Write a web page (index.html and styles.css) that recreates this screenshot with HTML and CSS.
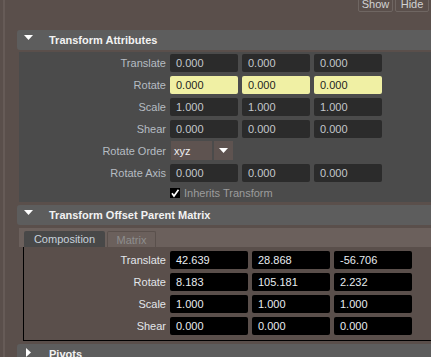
FILE: index.html
```html
<!DOCTYPE html>
<html>
<head>
<meta charset="utf-8">
<link rel="stylesheet" href="styles.css">
</head>
<body>
<div class="page">
  <div class="rail">
    <div class="topbar">
      <div class="tbtn show">Show</div>
      <div class="tbtn hide">Hide</div>
    </div>

    <div class="hdr">
      <svg class="tri-down" width="9" height="5" viewBox="0 0 9 5"><polygon points="0,0 9,0 4.5,5" fill="#ffffff"/></svg>
      <span class="hdr-title">Transform Attributes</span>
    </div>
    <div class="attrs">
      <div class="lbl">Translate</div>
      <div class="fld">0.000</div><div class="fld">0.000</div><div class="fld">0.000</div>
      <div class="lbl">Rotate</div>
      <div class="fld hi">0.000</div><div class="fld hi">0.000</div><div class="fld hi">0.000</div>
      <div class="lbl">Scale</div>
      <div class="fld">1.000</div><div class="fld">1.000</div><div class="fld">1.000</div>
      <div class="lbl">Shear</div>
      <div class="fld">0.000</div><div class="fld">0.000</div><div class="fld">0.000</div>
      <div class="lbl">Rotate Order</div>
      <div class="combo">
        <div class="combo-val">xyz</div>
        <div class="combo-btn"><svg width="9" height="5" viewBox="0 0 9 5"><polygon points="0,0 9,0 4.5,5" fill="#ffffff"/></svg></div>
      </div>
      <div class="lbl">Rotate Axis</div>
      <div class="fld">0.000</div><div class="fld">0.000</div><div class="fld">0.000</div>
      <div class="check-row">
        <svg class="cbox" width="10" height="10" viewBox="0 0 10 10"><rect width="10" height="10" fill="#000"/><path d="M2 5.2 L4 8 L8.5 1.8" stroke="#fff" stroke-width="1.7" fill="none"/></svg>
        <span class="check-lbl">Inherits Transform</span>
      </div>
    </div>

    <div class="hdr gap">
      <svg class="tri-down" width="9" height="5" viewBox="0 0 9 5"><polygon points="0,0 9,0 4.5,5" fill="#ffffff"/></svg>
      <span class="hdr-title">Transform Offset Parent Matrix</span>
    </div>
    <div class="tabs">
      <div class="tab active">Composition</div>
      <div class="tab inactive">Matrix</div>
    </div>
    <div class="mbox">
      <div class="lbl light">Translate</div>
      <div class="mfld">42.639</div><div class="mfld">28.868</div><div class="mfld">-56.706</div>
      <div class="lbl light">Rotate</div>
      <div class="mfld">8.183</div><div class="mfld">105.181</div><div class="mfld">2.232</div>
      <div class="lbl light">Scale</div>
      <div class="mfld">1.000</div><div class="mfld">1.000</div><div class="mfld">1.000</div>
      <div class="lbl light">Shear</div>
      <div class="mfld">0.000</div><div class="mfld">0.000</div><div class="mfld">0.000</div>
    </div>

    <div class="hdr gap">
      <svg class="tri-right" width="5" height="9" viewBox="0 0 5 9"><polygon points="0,0 5,4.5 0,9" fill="#ffffff"/></svg>
      <span class="hdr-title">Pivots</span>
    </div>
  </div>
</div>
</body>
</html>
```

FILE: styles.css
```css
html, body {
  margin: 0;
  padding: 0;
  overflow: hidden;
  background: #5a4f4b;
  font-family: "Liberation Sans", Arial, sans-serif;
  font-size: 11px;
}

.page {
  padding-left: 3px;
  height: 357px;
}

.rail {
  border-left: 2px solid #665b57;
  padding-left: 12px;
  height: 100%;
}

.topbar {
  height: 30px;
  display: flex;
  justify-content: flex-end;
  align-items: flex-start;
  gap: 2px;
  padding-right: 2px;
}

.tbtn {
  box-sizing: border-box;
  height: 20px;
  margin-top: -8px;
  border: 1px solid #6f6662;
  border-radius: 2px;
  color: #d2d2d2;
  display: flex;
  align-items: center;
  justify-content: center;
  padding-top: 3px;
}
.show { width: 35px; }
.hide { width: 34px; }

.hdr {
  height: 20px;
  background: #5d5d5d;
  border-radius: 3px 0 0 3px;
  display: flex;
  align-items: center;
  padding-left: 7px;
}
.hdr.gap { margin-top: 3px; }

.tri-down {
  align-self: flex-start;
  margin-top: 5px;
  flex: none;
}
.tri-right {
  align-self: flex-start;
  margin-top: 4px;
  margin-left: 2px;
  margin-right: 2px;
  flex: none;
}

.hdr-title {
  margin-left: 16px;
  color: #f2f2f2;
  font-weight: bold;
}

.attrs {
  margin-top: 2px;
  margin-left: 2px;
  background: #4b4b4b;
  display: grid;
  grid-template-columns: 147px 68px 68px 68px;
  grid-template-rows: repeat(6, 18px) 14px;
  column-gap: 4px;
  row-gap: 4px;
  padding: 2px 0 2px 0;
}

.lbl {
  text-align: right;
  color: #b6bcc2;
  line-height: 18px;
}
.lbl.light {
  color: #e2e6ea;
}

.fld {
  background: #2b2b2b;
  color: #c4c8cc;
  border-radius: 2px;
  line-height: 18px;
  padding-left: 6px;
}
.fld.hi {
  background: #f0f0a4;
  color: #1e1e1e;
}

.combo {
  grid-column: 2 / -1;
  display: flex;
  gap: 2px;
  margin-top: -1px;
  margin-left: 1px;
}
.combo-val {
  width: 41px;
  height: 19px;
  background: #5e5350;
  color: #f0f0f0;
  line-height: 20px;
  padding-left: 3px;
  box-sizing: border-box;
}
.combo-btn {
  width: 19px;
  height: 19px;
  background: #5e5350;
  display: flex;
  align-items: center;
  justify-content: center;
}

.check-row {
  grid-column: 2 / -1;
  display: flex;
  align-items: center;
  gap: 4px;
}
.cbox { flex: none; }
.check-lbl {
  color: #9c9c9c;
}

.tabs {
  margin-top: 3px;
  margin-left: 2px;
  height: 19px;
  background: #6b605c;
  display: flex;
  align-items: flex-end;
  padding-left: 5px;
  gap: 2px;
}
.tab {
  height: 16px;
  box-sizing: border-box;
  border-radius: 2px 2px 0 0;
  display: flex;
  align-items: center;
  justify-content: center;
}
.tab.active {
  width: 81px;
  background: #484848;
  color: #c8d2dc;
}
.tab.inactive {
  width: 49px;
  border: 1px solid #5a504c;
  border-bottom: none;
  color: #8e8e8e;
}

.mbox {
  margin-left: 6px;
  border-left: 1px solid #000;
  border-bottom: 1px solid #000;
  display: grid;
  grid-template-columns: 142px 78px 78px 78px;
  grid-auto-rows: 18px;
  column-gap: 4px;
  row-gap: 4px;
  padding: 4px 0 5px 0;
}

.mfld {
  background: #000;
  color: #e8ecf0;
  border-radius: 2px;
  line-height: 18px;
  padding-left: 6px;
}
```
